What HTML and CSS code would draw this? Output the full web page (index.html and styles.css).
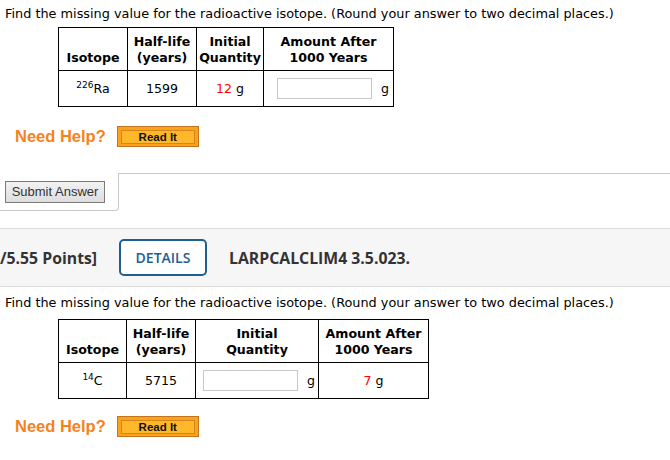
FILE: index.html
```html
<!DOCTYPE html>
<html>
<head>
<meta charset="utf-8">
<link rel="stylesheet" href="styles.css">
</head>
<body>
<div class="page">
  <p class="question">Find the missing value for the radioactive isotope. (Round your answer to two decimal places.)</p>
  <table class="iso t1">
    <colgroup><col class="c1"><col class="c2"><col class="c3"><col class="c4"></colgroup>
    <tr class="head">
      <th class="bottom">Isotope</th>
      <th>Half-life<br>(years)</th>
      <th>Initial<br>Quantity</th>
      <th>Amount After<br>1000 Years</th>
    </tr>
    <tr class="body">
      <td><sup>226</sup>Ra</td>
      <td>1599</td>
      <td><span class="red">12</span> g</td>
      <td class="incell a1"><span class="inp"></span><span>g</span></td>
    </tr>
  </table>
  <div class="help">
    <span class="need">Need Help?</span>
    <span class="readit"><span class="readin">Read It</span></span>
  </div>
  <div class="footer">
    <div class="submitcell"><span class="submit">Submit Answer</span></div>
    <div class="rest"></div>
  </div>
  <div class="band">
    <span class="points">/5.55 Points]</span>
    <span class="details">DETAILS</span>
    <span class="code">LARPCALCLIM4 3.5.023.</span>
  </div>
  <p class="question q2">Find the missing value for the radioactive isotope. (Round your answer to two decimal places.)</p>
  <table class="iso t2">
    <colgroup><col class="d1"><col class="d2"><col class="d3"><col class="d4"></colgroup>
    <tr class="head">
      <th class="bottom">Isotope</th>
      <th>Half-life<br>(years)</th>
      <th>Initial<br>Quantity</th>
      <th>Amount After<br>1000 Years</th>
    </tr>
    <tr class="body">
      <td><sup>14</sup>C</td>
      <td>5715</td>
      <td class="incell a2"><span class="inp"></span><span>g</span></td>
      <td><span class="red">7</span> g</td>
    </tr>
  </table>
  <div class="help h2">
    <span class="need">Need Help?</span>
    <span class="readit"><span class="readin">Read It</span></span>
  </div>
</div>
</body>
</html>
```
FILE: styles.css
```css
html, body { margin: 0; padding: 0; background: #fff; }
.page { width: 670px; height: 460px; overflow: hidden; font-family: "DejaVu Sans", Verdana, sans-serif; color: #000; }
.question { margin: 0; padding: 6px 0 0 5px; font-size: 12.85px; line-height: 16px; color: #000; white-space: nowrap; }
.iso { border-collapse: collapse; table-layout: fixed; margin-left: 58px; font-size: 12.6px; }
.t1 { margin-top: 5px; width: 335px; }
.t2 { margin-top: 8px; width: 370px; }
.c1 { width: 69px; } .c2 { width: 69px; } .c3 { width: 67px; } .c4 { width: 130px; }
.d1 { width: 68px; } .d2 { width: 69px; } .d3 { width: 123px; } .d4 { width: 110px; }
.iso th, .iso td { border: 1px solid #000; padding: 0; text-align: center; }
.iso th { font-weight: bold; line-height: 16px; vertical-align: bottom; padding-bottom: 4px; }
.head { height: 43px; }
.body { height: 36px; }
.body td { vertical-align: middle; }
sup { font-size: 9px; vertical-align: 5px; line-height: 0; }
.red { color: #ff0000; }
.incell { text-align: left !important; }
.a1 { padding-left: 13px !important; }
.a2 { padding-left: 7px !important; }
.incell .inp { display: inline-block; width: 93px; height: 19px; border: 1px solid #c8c8c8; vertical-align: middle; margin-right: 9px; background: #fff; }
.incell span:last-child { vertical-align: middle; }
.help { display: flex; align-items: center; padding-left: 15px; margin-top: 19px; height: 21px; }
.h2 { margin-top: 17px; }
.need { font-family: "Liberation Sans", Arial, sans-serif; font-weight: bold; font-size: 16.5px; color: #f58220; margin-right: 11px; }
.readit { display: inline-block; width: 80px; height: 19px; border: 1px solid #c3741f; background: #fba11c; box-sizing: content-box; padding: 0; }
.readin { display: block; margin: 3px 3px 2px 3px; height: 12px; border: 1px solid #d3861c; background: #ffb829; font-family: "Liberation Sans", Arial, sans-serif; font-weight: bold; font-size: 11.5px; line-height: 12px; text-align: center; color: #111; }
.footer { display: flex; margin-top: 26px; height: 38px; }
.submitcell { width: 119px; border-right: 1px solid #c8c8c8; border-bottom: 1px solid #c8c8c8; border-bottom-right-radius: 4px; padding-top: 8px; padding-left: 5px; box-sizing: border-box; }
.rest { flex: 1; border-top: 1px solid #c8c8c8; }
.submit { display: inline-block; width: 98px; height: 20px; border: 1px solid #7a7a7a; background: linear-gradient(#f2f2f2, #dedede); font-family: "Liberation Sans", Arial, sans-serif; font-size: 13px; line-height: 20px; text-align: center; color: #333; }
.band { margin-top: 17px; height: 57px; border-top: 1px solid #dcdcdc; border-bottom: 1px solid #dcdcdc; background: #f6f6f6; display: flex; align-items: center; font-family: "Open Sans", "Noto Sans", sans-serif; font-weight: bold; color: #333; font-size: 15.8px; }
.points { margin-left: 0; width: 119px; }
.details { box-sizing: border-box; width: 88px; height: 37px; border: 2px solid #1e5f93; border-radius: 5px; display: flex; align-items: center; justify-content: center; color: #1e5f93; font-weight: 600; font-size: 14px; background: #fff; }
.code { margin-left: 22px; }
.q2 { padding-top: 8px; }
```
